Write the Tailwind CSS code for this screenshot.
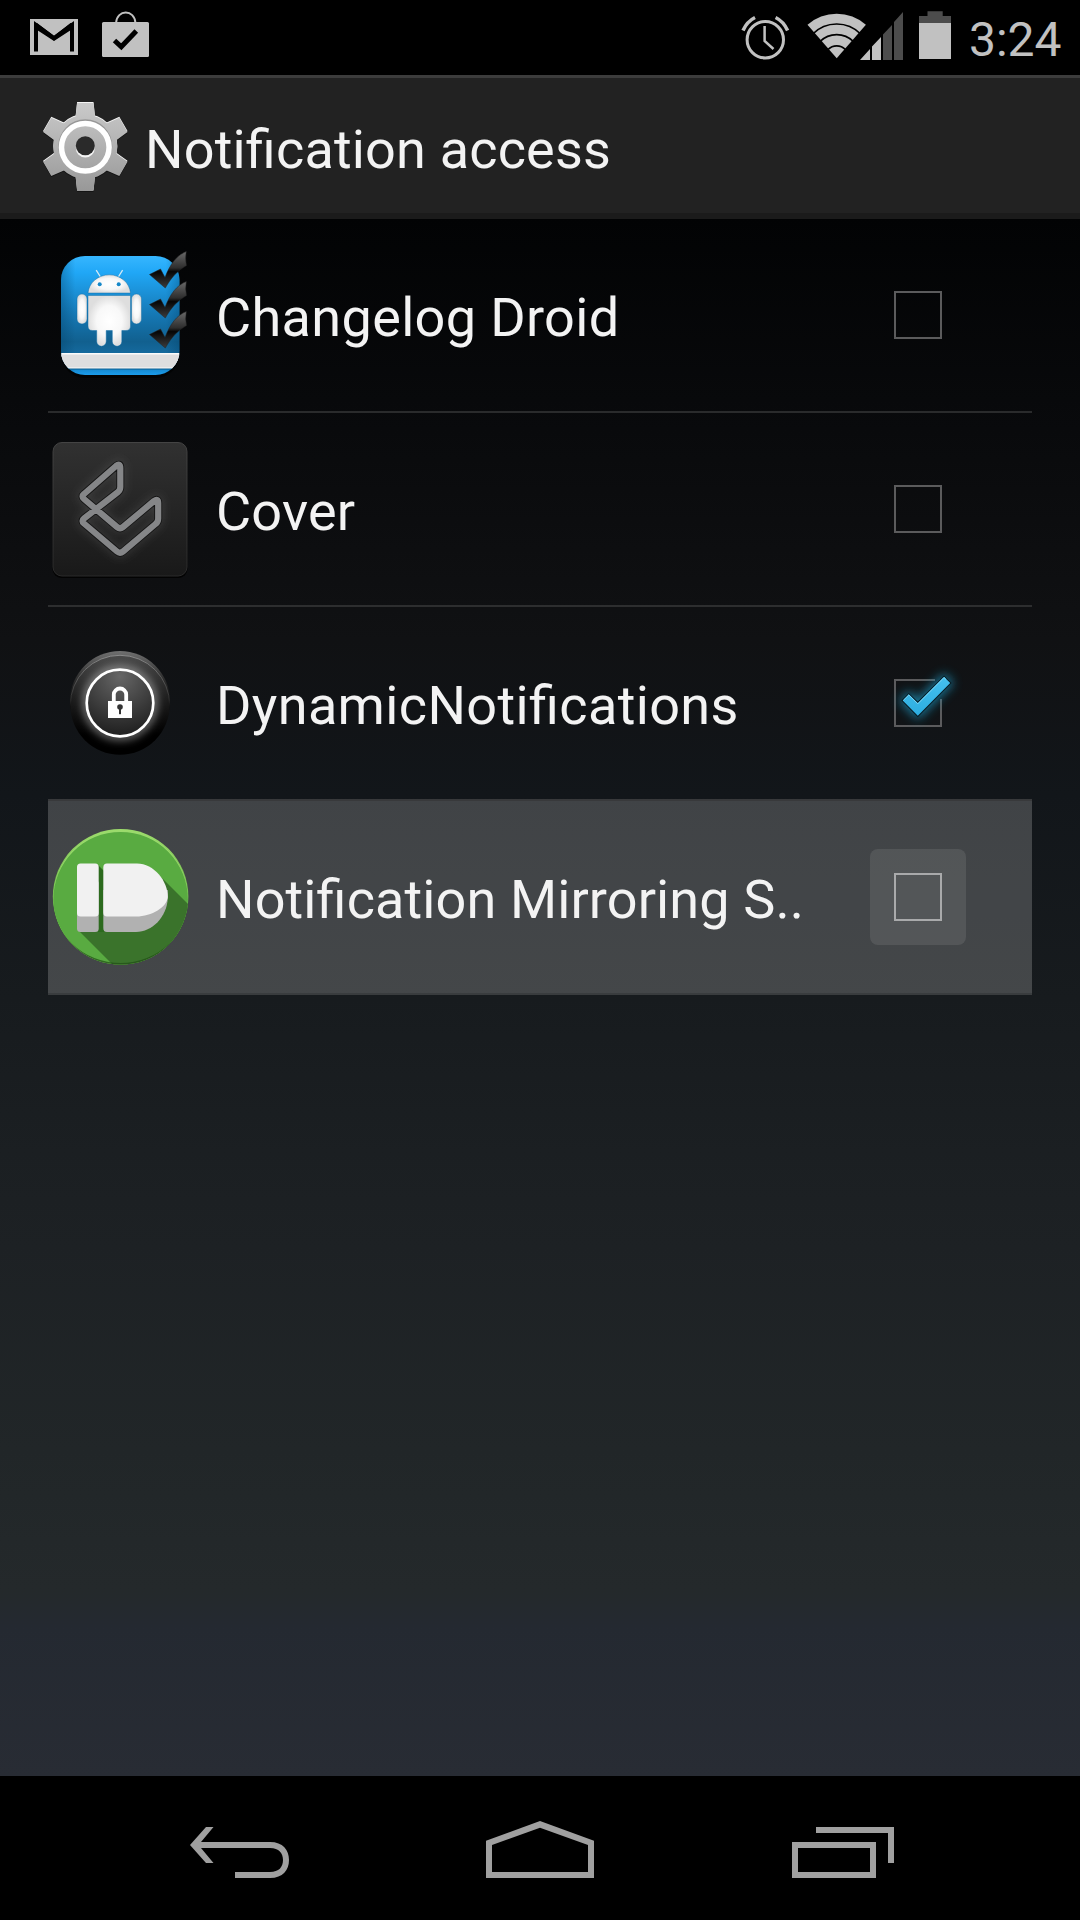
<!DOCTYPE html>
<html lang="en">
<head>
    <meta charset="UTF-8">
    <meta name="viewport" content="width=device-width, initial-scale=1.0">
    <title>Notification access</title>
    <script src="https://cdn.jsdelivr.net/npm/@tailwindcss/browser@4"></script>
</head>
<body class="bg-black">
    <div class="w-[1080px] h-[1920px] flex flex-col overflow-hidden font-['Roboto',sans-serif] text-[#f3f3f3] [font-feature-settings:'liga']">

        <!-- Status bar -->
        <div class="h-[75px] shrink-0 bg-black flex justify-between">
            <svg class="w-[180px] h-[75px]" viewBox="0 0 180 75">
                <rect x="30" y="19" width="48" height="36" fill="#c1c1c1"/>
                <path d="M36 51.5V25L54 38L72 25V51.5" fill="none" stroke="#000" stroke-width="4"/>
                <path d="M34 23H37L54 36L70.500 23H74V28L54 41L34 28z" fill="#000"/>
                <rect x="102" y="22" width="47" height="35" rx="1.500" fill="#c1c1c1"/>
                <path d="M116 23C117 9 134.500 9 135.500 23" fill="none" stroke="#c1c1c1" stroke-width="2"/>
                <path d="M114.500 40.500L121.300 46.800L136.300 31" fill="none" stroke="#000" stroke-width="5"/>
            </svg>
            <div class="flex">
                <svg class="w-[241px] h-[75px]" viewBox="728 0 241 75">
                    <!-- alarm -->
                    <g fill="none" stroke="#c1c1c1" stroke-width="3">
                        <circle cx="765.300" cy="39.700" r="18.200"/>
                        <path d="M743 30.500Q747 21.500 755 17.500M787.600 30.500Q783.600 21.500 775.600 17.500" stroke-width="3.500"/>
                        <path d="M764.600 26V41L773.500 49" stroke-width="2.500"/>
                    </g>
                    <!-- wifi -->
                    <path d="M836.700 58.200L807.500 24.800A44 44 0 0 1 865.900 24.800z" fill="#c1c1c1"/>
                    <g fill="none" stroke="#000" stroke-width="1.700">
                        <path d="M812.700 34A33.800 33.800 0 0 1 860.700 34"/>
                        <path d="M820 41.500A23.500 23.500 0 0 1 853.400 41.500"/>
                        <path d="M828 49.500A12.300 12.300 0 0 1 845.400 49.500"/>
                    </g>
                    <!-- signal -->
                    <path d="M860 60L870 49V60zM872 60V46.500L881 37V60z" fill="#c1c1c1"/>
                    <path d="M883 60V34.500L892 25V60zM894 60V22L903 12V60z" fill="#4c4c4c"/>
                    <!-- battery -->
                    <path d="M919 23V16H927.500V11.300H942.700V16H951V23z" fill="#4c4c4c"/>
                    <rect x="919" y="23" width="32" height="36" fill="#c1c1c1"/>
                </svg>
                <div class="w-[111px] pt-3 text-5xl leading-[56px] text-[#c1c1c1]">3:24</div>
            </div>
        </div>

        <!-- Action bar -->
        <div class="h-36 shrink-0 bg-[#222222] border-t-3 border-t-[#3c3c3c] border-b-6 border-b-[#1b1b1b] flex items-center">
            <svg class="w-[145px] h-[135px]" viewBox="0 78 145 135">
                <defs>
                    <linearGradient id="gear" x1="0" y1="102" x2="0" y2="191" gradientUnits="userSpaceOnUse">
                        <stop offset="0" stop-color="#cacaca"/>
                        <stop offset="1" stop-color="#989898"/>
                    </linearGradient>
                    <g id="gearBody" stroke-linejoin="round">
                        <circle cx="85.300" cy="146.500" r="32"/>
                        <path d="M75.500 117.500L77.100 102.500H93.500L95.100 117.500L105.500 123.500L119.300 117.400L127.500 131.600L115.300 140.500V152.500L127.500 161.400L119.300 175.600L105.500 169.500L95.100 175.500L93.500 190.500H77.100L75.500 175.500L65.100 169.500L51.300 175.600L43.100 161.400L55.300 152.500V140.500L43.100 131.600L51.300 117.400L65.100 123.500z"/>
                    </g>
                </defs>
                <use href="#gearBody" fill="#111" transform="translate(0 1.300)"/>
                <use href="#gearBody" fill="#f4f4f4" transform="translate(0 -.6)"/>
                <use href="#gearBody" fill="url(#gear)" transform="translate(0 .4)"/>
                <circle cx="85.300" cy="146.300" r="27" fill="#979797"/>
                <circle cx="85.300" cy="147.300" r="23.800" fill="url(#gear)" stroke="#fff" stroke-width="5.500"/>
                <circle cx="85.300" cy="148" r="9.500" fill="#f4f4f4"/>
                <circle cx="85.300" cy="145.700" r="9.500" fill="#2a2a2a"/>
            </svg>
            <h1 class="pt-[9px] text-[54px] leading-[64px] tracking-[0.18px]">Notification access</h1>
        </div>

        <!-- App list -->
        <div class="flex-1 px-12 bg-[linear-gradient(to_bottom,#020304_0%,#08090b_11.6%,#101113_27%,#12161a_37%,#171b1e_50%,#1b1f22_60%,#1d2124_66%,#212628_79%,#24292b_88%,#242931_90.5%,#282c34_100%)]">

            <div class="h-[194px] border-b-2 border-[#2a2b2c] flex items-center">
                <svg class="w-[168px] h-48" viewBox="48 219 168 192">
                    <defs>
                        <linearGradient id="sky" x1="0" y1="0" x2="0" y2="1">
                            <stop offset="0" stop-color="#36b6ff"/>
                            <stop offset=".14" stop-color="#20a7f6"/>
                            <stop offset=".5" stop-color="#1577b3"/>
                            <stop offset=".72" stop-color="#11608f"/>
                            <stop offset=".82" stop-color="#156a9e"/>
                            <stop offset=".95" stop-color="#1688ce"/>
                            <stop offset="1" stop-color="#1b9cec"/>
                        </linearGradient>
                        <linearGradient id="side" x1="0" y1="0" x2="1" y2="0">
                            <stop offset="0" stop-color="#003f66" stop-opacity=".35"/>
                            <stop offset=".12" stop-color="#003f66" stop-opacity="0"/>
                            <stop offset=".88" stop-color="#003f66" stop-opacity="0"/>
                            <stop offset="1" stop-color="#003f66" stop-opacity=".35"/>
                        </linearGradient>
                        <linearGradient id="tick" x1="0" y1="0" x2="0" y2="1">
                            <stop offset="0" stop-color="#6a6a6a"/>
                            <stop offset=".45" stop-color="#2d2d2d"/>
                            <stop offset=".55" stop-color="#060606"/>
                            <stop offset="1" stop-color="#3c3c3c"/>
                        </linearGradient>
                        <radialGradient id="droid">
                            <stop offset="0" stop-color="#fff"/>
                            <stop offset=".6" stop-color="#f8f8f8"/>
                            <stop offset="1" stop-color="#dedede"/>
                        </radialGradient>
                        <clipPath id="tile"><rect x="61" y="256" width="118.500" height="119" rx="24"/></clipPath>
                    </defs>
                    <rect x="61" y="259" width="118.500" height="119" rx="24" fill="#000" opacity=".6"/>
                    <g clip-path="url(#tile)">
                        <rect x="61" y="256" width="119" height="119" fill="url(#sky)"/>
                        <rect x="61" y="256" width="119" height="119" fill="url(#side)"/>
                        <rect x="61" y="353" width="119" height="16" fill="#fafafa"/>
                        <rect x="61" y="354.500" width="119" height="13" fill="#dededf"/>
                        <rect x="61" y="368.500" width="119" height="1" fill="#0d5c8b"/>
                    </g>
                    <g stroke="#0e6ba3" stroke-opacity=".45" fill="url(#droid)">
                        <path d="M88 293A21.300 19.500 0 0 1 130.500 293z"/>
                        <rect x="77" y="294" width="10" height="30" rx="5"/>
                        <rect x="131.500" y="294" width="10" height="30" rx="5"/>
                        <path d="M88 295.500H130.500V326Q130.500 330.500 126 330.500H121.800V341.500A4.700 4.700 0 0 1 112.300 341.500V330.500H106.200V341.500A4.700 4.700 0 0 1 96.700 341.500V330.500H92.500Q88 330.500 88 326z"/>
                    </g>
                    <path d="M96.200 270.200L100.200 276.500M122.600 270.200L118.600 276.500" stroke="#d5e9f5" stroke-width="1.300"/>
                    <circle cx="99.700" cy="284.300" r="2" fill="#1688c9"/>
                    <circle cx="118.700" cy="284.300" r="2" fill="#1688c9"/>
                    <g fill="url(#tick)" stroke="#222" stroke-width=".5">
                        <path d="M149.500 274.500L160.500 269L165 277.500C170 264 177 255 186.300 251.500Q185 259 186.500 265.500C177 271 171 278 165.300 288z"/>
                        <path d="M149.500 304.500L160.500 299L165 307.500C170 294 177 285 186.300 281.500Q185 289 186.500 295.500C177 301 171 308 165.300 318z"/>
                        <path d="M149.500 334.500L160.500 329L165 337.500C170 324 177 315 186.300 311.500Q185 319 186.500 325.500C177 331 171 338 165.300 348z"/>
                    </g>
                </svg>
                <span class="flex-1 pt-[5px] text-[54px] leading-[64px] tracking-[0.35px]">Changelog Droid</span>
                <div class="w-12 h-12 mr-[90px] border-2 border-[#5b5b5c]"></div>
            </div>

            <div class="h-[194px] border-b-2 border-[#2d2e2f] flex items-center">
                <svg class="w-[168px] h-48" viewBox="48 413 168 192">
                    <defs>
                        <linearGradient id="slate" x1="0" y1="0" x2="0" y2="1">
                            <stop offset="0" stop-color="#313131"/>
                            <stop offset="1" stop-color="#191919"/>
                        </linearGradient>
                        <linearGradient id="slateEdge" x1="0" y1="0" x2="0" y2="1">
                            <stop offset="0" stop-color="#444"/>
                            <stop offset="1" stop-color="#2a2a2a"/>
                        </linearGradient>
                        <filter id="soft" x="-30%" y="-30%" width="160%" height="160%"><feGaussianBlur stdDeviation="5"/></filter>
                        <path id="coverMark" d="M120.300 468V487Q120.300 490 118 492L84 518.500Q81 520.800 84 523.500L117 551.500Q120 554 123 551.500L155.500 524Q158.200 522 158.200 518.500V503Q158.200 498 154 501L123 527Q120 529.500 117 527L84 499Q81 496.500 84 494L116 466Q120.300 462.500 120.300 468z" fill="none" stroke-linejoin="round"/>
                    </defs>
                    <rect x="52.500" y="443" width="135" height="135" rx="9" fill="#030303"/>
                    <rect x="53" y="442.500" width="134" height="133.500" rx="9" fill="url(#slate)" stroke="url(#slateEdge)"/>
                    <use href="#coverMark" stroke="#777" stroke-opacity=".3" stroke-width="9" filter="url(#soft)"/>
                    <use href="#coverMark" stroke="#151515" stroke-width="8"/>
                    <use href="#coverMark" stroke="#858688" stroke-width="6.200"/>
                </svg>
                <span class="flex-1 pt-[5px] text-[54px] leading-[64px] tracking-[0.2px]">Cover</span>
                <div class="w-12 h-12 mr-[90px] border-2 border-[#5b5b5c]"></div>
            </div>

            <div class="h-[194px] border-b-2 border-[#38393b] flex items-center">
                <svg class="w-[168px] h-48" viewBox="48 607 168 192">
                    <defs>
                        <linearGradient id="rim" x1="0" y1="0" x2="0" y2="1">
                            <stop offset="0" stop-color="#707070"/>
                            <stop offset=".25" stop-color="#333"/>
                            <stop offset=".5" stop-color="#0c0c0c"/>
                            <stop offset="1" stop-color="#000"/>
                        </linearGradient>
                        <linearGradient id="knob" x1="0" y1="0" x2="0" y2="1">
                            <stop offset="0" stop-color="#4a4a4a"/>
                            <stop offset=".45" stop-color="#1c1c1c"/>
                            <stop offset=".8" stop-color="#000"/>
                        </linearGradient>
                        <linearGradient id="knobEdge" x1="0" y1="0" x2="0" y2="1">
                            <stop offset="0" stop-color="#999"/>
                            <stop offset=".45" stop-color="#333"/>
                            <stop offset=".55" stop-color="#000" stop-opacity="0"/>
                        </linearGradient>
                        <radialGradient id="knobFace" cx=".5" cy=".1" r=".85">
                            <stop offset="0" stop-color="#666"/>
                            <stop offset="1" stop-color="#222"/>
                        </radialGradient>
                        <filter id="glow" x="-40%" y="-40%" width="180%" height="180%"><feGaussianBlur stdDeviation="4"/></filter>
                    </defs>
                    <circle cx="120" cy="701" r="50" fill="url(#rim)"/>
                    <circle cx="120" cy="705" r="49.700" fill="url(#knob)" stroke="url(#knobEdge)" stroke-width=".8"/>
                    <circle cx="120" cy="703" r="34" fill="none" stroke="#ddd" stroke-opacity=".6" stroke-width="6" filter="url(#glow)"/>
                    <circle cx="120" cy="703" r="33.300" fill="url(#knobFace)" stroke="#fff" stroke-width="2.700"/>
                    <path d="M113.800 702V694.500A6.200 6 0 0 1 126.200 694.500V702" fill="none" stroke="#fff" stroke-width="3.800"/>
                    <rect x="108" y="701" width="24" height="17" fill="#fff"/>
                    <circle cx="120" cy="707" r="2.800" fill="#333"/>
                    <rect x="119" y="708" width="2" height="6.200" fill="#333"/>
                </svg>
                <span class="flex-1 pt-[5px] text-[54px] leading-[64px] tracking-[0.36px]">DynamicNotifications</span>
                <svg class="w-24 h-24 mr-[66px]" viewBox="870 655 96 96">
                    <defs>
                        <filter id="blueGlow" x="-50%" y="-50%" width="200%" height="200%"><feGaussianBlur stdDeviation="5.500"/></filter>
                        <linearGradient id="blue" x1="0" y1="0" x2="0" y2="1">
                            <stop offset="0" stop-color="#45c0ee"/>
                            <stop offset="1" stop-color="#2cade0"/>
                        </linearGradient>
                    </defs>
                    <path d="M935 680H895V726H941V699" fill="none" stroke="#5b5b5d" stroke-width="2"/>
                    <path d="M902.700 700.500L908.800 694.300L917.800 703L944 676.800L950.200 683L917.800 715.800z" fill="#1f9fcb" stroke="#1f9fcb" stroke-width="5" opacity=".75" filter="url(#blueGlow)"/>
                    <path d="M902.700 700.500L908.800 694.300L917.800 703L944 676.800L950.200 683L917.800 715.800z" fill="url(#blue)" stroke="#071a22" stroke-width="2" paint-order="stroke"/>
                    <path d="M903.500 700.200L908.800 695L917.800 703.800L944 677.600L946 679.500" fill="none" stroke="#7ad4f4" stroke-width="1"/>
                </svg>
            </div>

            <!-- pressed row -->
            <div class="h-[194px] border-b-2 border-[#393c3e] bg-[#cccccc]/25 bg-clip-padding flex items-center">
                <svg class="w-[168px] h-48" viewBox="48 801 168 192">
                    <defs>
                        <clipPath id="disc"><circle cx="120.600" cy="896.800" r="67.800"/></clipPath>
                        <linearGradient id="discEdge" x1="0" y1="0" x2="0" y2="1">
                            <stop offset="0" stop-color="#9ddc6c"/>
                            <stop offset=".5" stop-color="#6fbb4a"/>
                            <stop offset=".6" stop-color="#3f8a2c"/>
                            <stop offset="1" stop-color="#1f4d16"/>
                        </linearGradient>
                    </defs>
                    <circle cx="120.600" cy="896.800" r="67.800" fill="url(#discEdge)"/>
                    <g clip-path="url(#disc)">
                        <circle cx="120.600" cy="898.300" r="67.300" fill="#9bda6e"/>
                        <circle cx="120.600" cy="899.300" r="67.300" fill="#59ab41"/>
                        <path d="M79 931L125 977H200V916L163 879L140 864L110 900z" fill="#3a732b"/>
                        <path d="M98 865L104 871V932H98z" fill="#2c6a1e"/>
                        <path d="M52 897A68.600 66 0 0 0 189.200 897V970H52z" fill="#1f4d16" opacity=".7"/>
                    </g>
                    <rect x="77" y="880" width="21.700" height="52" rx="3.500" fill="#b1b1b1"/>
                    <rect x="77" y="863.500" width="21.700" height="53" rx="3.500" fill="#f1f1f1"/>
                    <path d="M103.300 890H167.800V898C167 917 152 932 136 932H107Q103.300 932 103.300 928z" fill="#b1b1b1"/>
                    <path d="M107 863.500H137C154 863.500 167.800 881 167.800 897C167 907 152 916.500 136 916.500H107Q103.300 916.500 103.300 912.500V867.500Q103.300 863.500 107 863.500z" fill="#f1f1f1"/>
                </svg>
                <span class="flex-1 pt-[5px] text-[54px] leading-[64px] tracking-[0.12px] whitespace-nowrap">Notification Mirroring S..</span>
                <div class="w-24 h-24 mr-[66px] rounded-lg bg-[#cccccc]/13 flex items-center justify-center">
                    <div class="w-12 h-12 border-2 border-[#a9aaab]"></div>
                </div>
            </div>
        </div>

        <!-- Navigation bar -->
        <div class="h-36 shrink-0 bg-black flex justify-center">
            <svg class="w-[300px] h-36" viewBox="90 1776 300 144">
                <path d="M190 1845L206 1827H213.500L201 1842H270C283 1842 289 1850 289 1860C289 1870 283 1878 270 1878H235V1872H270C279 1872 283 1867 283 1860C283 1853 279 1848 270 1848H201L213.500 1863H206z" fill="#a0a0a0"/>
            </svg>
            <svg class="w-[300px] h-36" viewBox="390 1776 300 144">
                <path d="M486 1840.700L540 1821L594 1840.700V1878H486zM492 1845V1872H588V1845L540 1827.700z" fill="#a0a0a0" fill-rule="evenodd"/>
            </svg>
            <svg class="w-[300px] h-36" viewBox="690 1776 300 144">
                <path d="M816 1827H894V1863H888V1833H816z" fill="#a0a0a0"/>
                <rect x="795" y="1845" width="78" height="30" fill="none" stroke="#a0a0a0" stroke-width="6"/>
            </svg>
        </div>
    </div>
</body>
</html>
